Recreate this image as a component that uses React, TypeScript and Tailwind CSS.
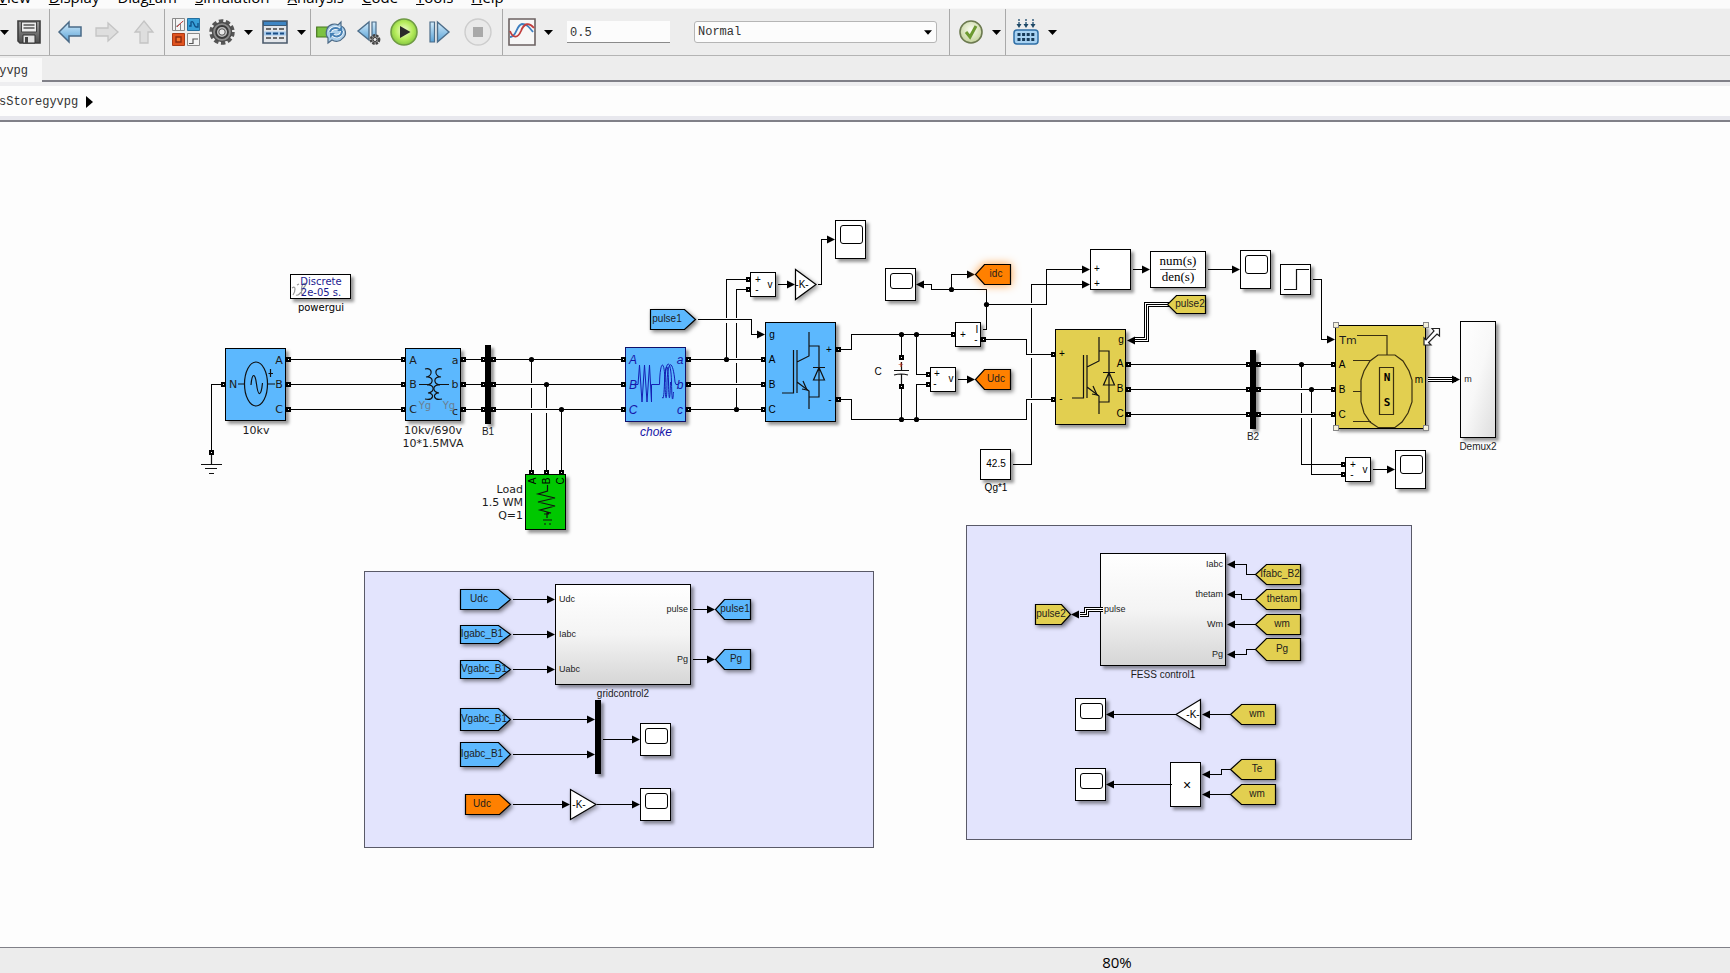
import type { ReactNode } from "react";
import { clsx } from "clsx";

// Page position of the canvas' top edge: diagram coordinates count from the window's top
const CANVAS_TOP = 122;

const menuItems = [
  ["", "V", "iew"],
  ["", "D", "isplay"],
  ["Diag", "r", "am"],
  ["", "S", "imulation"],
  ["", "A", "nalysis"],
  ["", "C", "ode"],
  ["", "T", "ools"],
  ["", "H", "elp"],
];

/* ---------- toolbar ---------- */

function Caret({ label }: { label: string }) {
  return (
    <button type="button" aria-label={label} className="flex h-6 w-[9px] items-center justify-center">
      <svg width="9" height="5" viewBox="0 0 9 5">
        <path d="M0 0h9L4.5 5z" fill="#000" />
      </svg>
    </button>
  );
}

function ToolButton({ label, className, size, children }: { label: string; className: string; size: string; children: ReactNode }) {
  return (
    <button type="button" aria-label={label} className={clsx("flex shrink-0 items-center justify-center", className)}>
      <svg viewBox={size} className="h-full w-full overflow-visible">
        {children}
      </svg>
    </button>
  );
}

function Group({ className, children }: { className: string; children: ReactNode }) {
  return <div className={clsx("flex shrink-0 items-center border-[#a9a9a9]", className)}>{children}</div>;
}

function Toolbar() {
  return (
    <div className="flex h-[48px] shrink-0 overflow-hidden border-t border-b border-t-[#f6f6f6] border-b-[#b4b4b4] bg-[#ededed]">
      <svg width="0" height="0" className="absolute">
        <defs>
          <linearGradient id="blue" x1="0" y1="0" x2="0" y2="1">
            <stop offset="0" stopColor="#d3ecfb" />
            <stop offset="1" stopColor="#5aa2d6" />
          </linearGradient>
          <linearGradient id="gray" x1="0" y1="0" x2="0" y2="1">
            <stop offset="0" stopColor="#9a9a9a" />
            <stop offset="1" stopColor="#4e4e4e" />
          </linearGradient>
          <radialGradient id="green" cx="0.5" cy="0.45" r="0.55">
            <stop offset="0" stopColor="#f4ffd6" />
            <stop offset="0.6" stopColor="#b6ec5c" />
            <stop offset="1" stopColor="#86c840" />
          </radialGradient>
          <radialGradient id="pale" cx="0.5" cy="0.4" r="0.6">
            <stop offset="0" stopColor="#fbfcf4" />
            <stop offset="1" stopColor="#c3d39a" />
          </radialGradient>
        </defs>
      </svg>
      <Group className="border-r gap-2 pr-2">
        <Caret label="New options" />
        <ToolButton label="Save" className="h-6 w-6" size="0 0 24 24">
          <path d="M1 1h22v22H3l-2-2z" fill="url(#gray)" stroke="#3c3c3c" strokeWidth="1.6" />
          <path d="M4.500 2h15v10h-15z" fill="#ececec" stroke="#444" />
          <path d="M6.500 5h11M6.500 8h11" stroke="#555" strokeWidth="1.400" />
          <path d="M6 15h12v8H6z" fill="#e2e2e2" stroke="#333" />
          <path d="M8 17h3v6H8z" fill="#444" />
        </ToolButton>
      </Group>
      <Group className="border-r gap-[13px] px-2">
        <ToolButton label="Back" className="h-6 w-6" size="0 0 24 24">
          <path d="M1 12 11 2v5h12v9H11v6z" fill="url(#blue)" stroke="#4a6a86" strokeWidth="1.500" />
        </ToolButton>
        <ToolButton label="Forward" className="h-6 w-6" size="0 0 24 24">
          <path d="M23 12 13 3v5H1v8h12v5z" fill="#dedede" stroke="#c4c4c4" strokeWidth="1.300" />
        </ToolButton>
        <ToolButton label="Up" className="h-6 w-6" size="0 0 24 24">
          <path d="M12 1l9 11h-5v11H8V12H3z" fill="#dedede" stroke="#c4c4c4" strokeWidth="1.300" />
        </ToolButton>
      </Group>
      <Group className="border-r gap-[9px] pr-1 pl-[7px]">
        <ToolButton label="Library browser" className="h-7 w-7" size="0 0 28 28">
          <path d="M.5.5h12v12H.5zM15.500 15.500h12v12h-12z" fill="#f4f4f4" stroke="#8a8a8a" />
          <path d="M3.500 1v11M3.500 9l8-6M8.500 12V5" stroke="#888" fill="none" />
          <path d="M5 9l6-6" stroke="#c44" fill="none" />
          <path d="M15.500.5h12v12h-12z" fill="#38a0d8" stroke="#2470a0" />
          <path d="M17 8h2V4c3-2 3 5 5 5h2V5" stroke="#0e4f86" strokeWidth="1.300" fill="none" />
          <path d="M.5 15.500h12v12H.5z" fill="#e0531f" stroke="#a83a16" />
          <path d="M4 19h5v5H4z" fill="#f5752f" stroke="#8a2a10" strokeWidth="1.400" />
          <path d="M17 25.500h4V21h5" stroke="#555" fill="none" strokeWidth="1.200" />
        </ToolButton>
        <ToolButton label="Model configuration" className="h-[26px] w-[26px]" size="0 0 26 26">
          <circle cx="13" cy="13" r="10.500" fill="none" stroke="#555" strokeWidth="4.500" strokeDasharray="4.200 2.400" />
          <circle cx="13" cy="13" r="9.500" fill="#8b8b8b" stroke="#4c4c4c" strokeWidth="1.400" />
          <circle cx="13" cy="13" r="6" fill="#bcbcbc" stroke="#3a3a3a" strokeWidth="1.800" />
          <circle cx="13" cy="13" r="3.200" fill="#e8e8e8" stroke="#555" />
        </ToolButton>
        <Caret label="Configuration options" />
        <ToolButton label="Model explorer" className="h-[26px] w-[26px]" size="0 0 26 26">
          <path d="M1 2h24v22H1z" fill="#e3e6ea" stroke="#4b5b6c" strokeWidth="1.600" />
          <path d="M1.500 2.500h23v4h-23z" fill="#3f86c4" stroke="#3c5a76" />
          <path d="M4 10h5m2 0h4m2 0h5M4 19h5m2 0h4m2 0h5" stroke="#444" strokeWidth="1.500" />
          <path d="M2 12.500h22v4H2z" fill="#a9cdee" />
          <path d="M4 14.500h5m2 0h5m2 0h4" stroke="#1c4f86" strokeWidth="1.800" />
        </ToolButton>
        <Caret label="Explorer options" />
      </Group>
      <Group className="border-r gap-[9px] pr-[10px] pl-[5px]">
        <ToolButton label="Fast restart" className="h-6 w-[30px]" size="0 0 30 24">
          <path d="M.7 7h11v10H.7z" fill="#7cc242" stroke="#47761f" strokeWidth="1.200" />
          <path d="M11 9c2-5 8-6 11-4l3-3v4c5 2 6 9 2 12-3 4-8 4-11 2l-4 3v-5c-2-2-2-6-1-9z" fill="#a9cde9" stroke="#4c6a86" strokeWidth="1.200" />
          <path d="M14 12c1-4 6-5 9-3M26 11c0 5-6 7-9 4" fill="none" stroke="#fff" strokeWidth="3.600" />
          <path d="M14 12c1-4 6-5 9-3M26 11c0 5-6 7-9 4" fill="none" stroke="#4680b4" strokeWidth="2" />
          <path d="M21 11l5 0 0-5zM19 13l-5 0 0 5z" fill="#4680b4" />
        </ToolButton>
        <ToolButton label="Step back" className="h-[26px] w-[26px]" size="0 0 26 26">
          <path d="M14 3v18L3 12z" fill="url(#blue)" stroke="#4d6d89" strokeWidth="1.400" />
          <path d="M17 3h4v18h-4z" fill="url(#blue)" stroke="#4d6d89" strokeWidth="1.200" />
          <circle cx="20" cy="20.500" r="4.200" fill="#999" stroke="#444" strokeWidth="2.400" strokeDasharray="2.400 1" />
          <circle cx="20" cy="20.500" r="2" fill="#eee" stroke="#333" />
        </ToolButton>
        <ToolButton label="Run" className="h-7 w-7" size="0 0 28 28">
          <circle cx="14" cy="14" r="13" fill="url(#green)" stroke="#6f9a44" strokeWidth="1.600" />
          <path d="M10 8l10.500 6L10 20z" fill="#2a2a2a" />
        </ToolButton>
        <ToolButton label="Step forward" className="h-6 w-6" size="0 0 24 24">
          <path d="M3 2h4.500v20H3z" fill="url(#blue)" stroke="#4d6d89" strokeWidth="1.200" />
          <path d="M10.500 2v20L22 12z" fill="url(#blue)" stroke="#4d6d89" strokeWidth="1.400" />
        </ToolButton>
        <ToolButton label="Stop" className="ml-1 h-7 w-7" size="0 0 28 28">
          <circle cx="14" cy="14" r="13" fill="#e9e9e9" stroke="#cdcdcd" strokeWidth="1.400" />
          <path d="M9 9h10v10H9z" fill="#a9a9a9" />
        </ToolButton>
      </Group>
      <Group className="border-r pr-3 pl-[5px]">
        <ToolButton label="Simulation data inspector" className="h-7 w-7" size="0 0 28 28">
          <path d="M1 1h26v26H1z" fill="#f7f7f7" stroke="#6c6262" strokeWidth="1.600" />
          <path d="M2 19c7 0 6-12 12-13 5 0 7 3 11 8" fill="none" stroke="#3d7fc0" strokeWidth="1.800" />
          <path d="M2 13c3 8 8 7 11 0 3-8 8-9 13-3" fill="none" stroke="#c23f3f" strokeWidth="1.800" />
        </ToolButton>
        <div className="mr-[14px] ml-2 flex">
          <Caret label="Inspector options" />
        </div>
        <input
          aria-label="Simulation stop time"
          defaultValue="0.5"
          className="h-[22px] w-[103px] border-b border-[#8a8a8a] bg-[#fcfcfc] px-[3px] pt-[2px] font-['Liberation_Mono',monospace] text-[12px] text-[#333] outline-none"
        />
        <div className="relative ml-6">
          <select
            aria-label="Simulation mode"
            className="block h-[22px] w-[243px] appearance-none rounded-[3px] border border-[#b5b5b5] bg-[#fcfcfc] px-[3px] font-['Liberation_Mono',monospace] text-[12px] text-[#333] outline-none"
          >
            <option>Normal</option>
            <option>Accelerator</option>
            <option>Rapid Accelerator</option>
          </select>
          <svg width="8" height="5" viewBox="0 0 9 5" className="pointer-events-none absolute top-[9px] right-[5px]">
            <path d="M0 0h9L4.500 5z" fill="#000" />
          </svg>
        </div>
      </Group>
      <Group className="border-r gap-[9px] pr-1 pl-[9px]">
        <ToolButton label="Model advisor" className="h-6 w-6" size="0 0 24 24">
          <circle cx="12" cy="12" r="11" fill="url(#pale)" stroke="#6c7a50" strokeWidth="1.600" />
          <path d="M7 12l4 5 6-11" fill="none" stroke="#6c9a30" strokeWidth="3" />
        </ToolButton>
        <Caret label="Advisor options" />
      </Group>
      <Group className="gap-[9px] pl-[7px]">
        <ToolButton label="Build model" className="h-[26px] w-[26px]" size="0 0 26 26">
          <path d="M6 0v6M13 0v6M20 0v6" stroke="#2c5878" strokeWidth="1.400" strokeDasharray="2 1" />
          <path d="M3.500 5h5L6 9zM10.500 5h5L13 9zM17.500 5h5L20 9z" fill="#1e4866" />
          <rect x="1" y="11" width="24" height="14" rx="3" fill="#a8d2f2" stroke="#2f6fa6" strokeWidth="1.500" />
          <path d="M4.500 15.500h17M4.500 20.500h17" stroke="#173a58" strokeWidth="3" strokeDasharray="3 1.600" />
        </ToolButton>
        <Caret label="Build options" />
      </Group>
    </div>
  );
}

/* ---------- diagram pieces ---------- */

const fills = {
  white: "bg-white",
  blue: "bg-[#5cb8fe]",
  gold: "bg-[#e2cf50]",
  green: "bg-[#00c800]",
  black: "bg-black",
  fade: "bg-linear-to-b from-white via-[#f4f4f4] to-[#d6d6d6]",
  tall: "bg-linear-to-br from-white via-[#f8f8f8] to-[#dedede]",
};

type BlockProps = { box: number[]; fill?: keyof typeof fills; edge?: string; children?: ReactNode };

function Block({ box, fill = "white", edge = "border-black", children }: BlockProps) {
  const [x1, y1, x2, y2] = box;
  return (
    <div
      className={clsx("absolute border shadow-[3px_3px_3px_rgba(0,0,0,0.4)]", edge, fills[fill])}
      style={{ left: x1, top: y1 - CANVAS_TOP, width: x2 - x1 + 1, height: y2 - y1 + 1 }}
    >
      {children}
    </div>
  );
}

const aligns = { left: "", center: "-translate-x-1/2", right: "-translate-x-full" };

type LabelProps = { x: number; y: number; text: string; align?: keyof typeof aligns; className?: string };

function Label({ x, y, text, align = "center", className = "text-[10px]" }: LabelProps) {
  return (
    <span
      className={clsx("absolute whitespace-nowrap leading-[12px]!", aligns[align], className)}
      style={{ left: x, top: y - 6 - CANVAS_TOP }}
    >
      {text}
    </span>
  );
}

const tagFills = { blue: "fill-[#5cb8fe]", gold: "fill-[#e2cf50]", orange: "fill-[#ff8000]" };

// A From/Goto tag. Its point is `tip` px long and looks to the right or to the left.
type TagProps = { box: number[]; tip: number; dir: "left" | "right"; color: keyof typeof tagFills; text: string; textX?: number; glow?: boolean };

function Tag({ box, tip, dir, color, text, textX, glow }: TagProps) {
  const [x1, y1, x2, y2] = box;
  const w = x2 - x1;
  const h = y2 - y1;
  const points =
    dir === "right"
      ? `0,0 ${w - tip},0 ${w},${h / 2} ${w - tip},${h} 0,${h}`
      : `${w},0 ${tip},0 0,${h / 2} ${tip},${h} ${w},${h}`;
  const middle = dir === "right" ? x1 + (w - tip) / 2 : x1 + tip + (w - tip) / 2 - 1;
  return (
    <>
      <div className="absolute" style={{ left: x1, top: y1 - CANVAS_TOP, width: w + 1, height: h + 1 }}>
        <svg
          viewBox={`-0.5 -0.5 ${w + 1} ${h + 1}`}
          className={clsx(
            "block h-full w-full overflow-visible",
            glow ? "drop-shadow-[0_0_5px_#ff9d3c]" : "drop-shadow-[2px_2px_2px_rgba(0,0,0,0.5)]",
          )}
        >
          <polygon points={points} className={tagFills[color]} stroke="#000" strokeWidth="1.200" />
        </svg>
      </div>
      <Label x={Math.round(textX ?? middle)} y={Math.round((y1 + y2) / 2)} text={text} className="text-[10px] text-[#1c1c1c]" />
    </>
  );
}

function Scope({ box }: { box: number[] }) {
  return (
    <Block box={box}>
      <div className="mt-1 mr-[2px] ml-1 h-1/2 rounded-[3px] border border-black" />
    </Block>
  );
}

const tags: TagProps[] = [
  { box: [650, 309, 695, 329], tip: 11, dir: "right", color: "blue", text: "pulse1" },
  { box: [975, 264, 1010, 284], tip: 9, dir: "left", color: "orange", text: "idc", glow: true },
  { box: [975, 369, 1010, 389], tip: 9, dir: "left", color: "orange", text: "Udc" },
  { box: [1167, 295, 1205, 313], tip: 9, dir: "left", color: "gold", text: "pulse2", textX: 1190 },
  { box: [460, 589, 510, 609], tip: 12, dir: "right", color: "blue", text: "Udc" },
  { box: [460, 625, 510, 643], tip: 12, dir: "right", color: "blue", text: "Igabc_B1", textX: 482 },
  { box: [460, 660, 510, 678], tip: 12, dir: "right", color: "blue", text: "Vgabc_B1", textX: 484 },
  { box: [460, 708, 510, 730], tip: 12, dir: "right", color: "blue", text: "Vgabc_B1", textX: 484 },
  { box: [460, 742, 510, 766], tip: 12, dir: "right", color: "blue", text: "Igabc_B1", textX: 482 },
  { box: [465, 794, 510, 814], tip: 11, dir: "right", color: "orange", text: "Udc" },
  { box: [715, 599, 750, 619], tip: 9, dir: "left", color: "blue", text: "pulse1", textX: 735 },
  { box: [715, 649, 750, 669], tip: 9, dir: "left", color: "blue", text: "Pg" },
  { box: [1035, 604, 1070, 624], tip: 9, dir: "right", color: "gold", text: "pulse2", textX: 1051 },
  { box: [1255, 564, 1300, 584], tip: 11, dir: "left", color: "gold", text: "Ifabc_B2", textX: 1280 },
  { box: [1255, 589, 1300, 609], tip: 11, dir: "left", color: "gold", text: "thetam" },
  { box: [1255, 614, 1300, 634], tip: 11, dir: "left", color: "gold", text: "wm" },
  { box: [1255, 638, 1300, 660], tip: 11, dir: "left", color: "gold", text: "Pg" },
  { box: [1230, 704, 1275, 724], tip: 11, dir: "left", color: "gold", text: "wm" },
  { box: [1230, 759, 1275, 779], tip: 11, dir: "left", color: "gold", text: "Te" },
  { box: [1230, 784, 1275, 804], tip: 11, dir: "left", color: "gold", text: "wm" },
];

const scopes = [
  [835, 220, 865, 258],
  [885, 268, 915, 300],
  [1240, 250, 1270, 288],
  [1395, 450, 1425, 488],
  [640, 723, 670, 755],
  [640, 788, 670, 820],
  [1075, 698, 1105, 730],
  [1075, 768, 1105, 800],
];

// A wire that crosses another one leaves a small gap there
const wires = [
  // grid side
  "M224 384H211V450",
  "M286 359H405M286 384H405M286 409H405",
  "M461 359H625M461 384H625M461 409H625",
  "M531 359V382M531 387V407M531 412V470",
  "M546 384V407M546 412V470",
  "M561 409V470",
  "M686 359H765M686 384H765M686 409H765",
  "M726 359V322M726 317V279H748",
  "M736 409V387M736 382V362M736 357V322M736 317V289H748",
  "M697 319H751V334H760",
  "M777 284H790M817 284H821V239H830",
  // dc link
  "M838 349H851V334H953",
  "M838 399H851V419H1026V399H1053",
  "M901 334V357M901 386V419",
  "M916 334V374H928M928 384H916V419",
  "M957 379H970",
  "M982 329H986V289H931V284H922",
  "M951 289V274H970",
  "M986 304H1046V269H1085",
  "M985 339H1026V354H1053",
  "M1012 464H1031V402M1031 397V357M1031 352V307M1031 302V284H1085",
  "M1132 269H1145M1207 269H1235",
  // machine side
  "M1128 364H1335M1128 389H1335M1128 414H1335",
  "M1312 279H1321V339H1330",
  "M1301 364V387M1301 392V412M1301 417V464H1345",
  "M1311 389V412M1311 417V474H1345",
  "M1372 469H1390",
  // grid control area
  "M512 599H550M512 634H550M512 669H550",
  "M512 719H590M512 754H590M602 739H635",
  "M512 804H565M596 804H635",
  "M692 609H710M692 659H710",
  // FESS control area
  "M1255 574H1246V564H1234M1255 599H1241V594H1234M1255 624H1232M1255 649H1246V654H1234",
  "M1176 714H1112M1230 714H1207",
  "M1171 784H1112M1230 769H1221V774H1209M1230 794H1207",
];

const arrowsRight = [
  [765, 334], [795, 284], [835, 239], [975, 274], [975, 379], [1090, 269], [1090, 284], [1150, 269], [1240, 269],
  [1335, 339], [1395, 469], [1460, 379], [555, 599], [555, 634], [555, 669], [595, 719], [595, 754], [640, 739],
  [640, 804], [570, 804], [715, 609], [715, 659],
];

const arrowsLeft = [
  [916, 284], [1127, 340], [1071, 614], [1227, 564], [1227, 594], [1227, 624], [1227, 654], [1106, 714], [1202, 714],
  [1106, 784], [1202, 774], [1202, 794],
];

const ports = [
  [223, 384], [288, 359], [288, 384], [288, 409], [403, 359], [403, 384], [403, 409], [463, 359], [463, 384], [463, 409],
  [483, 359], [483, 384], [483, 409], [493, 359], [493, 384], [493, 409], [211, 452], [531, 472], [546, 472], [561, 472],
  [623, 359], [623, 384], [623, 409], [688, 359], [688, 384], [688, 409], [763, 359], [763, 384], [763, 409],
  [748, 279], [748, 289], [838, 349], [838, 399], [901, 357], [901, 386], [953, 334], [983, 339], [928, 374], [928, 384],
  [1053, 354], [1053, 399], [1128, 364], [1128, 389], [1128, 414], [1248, 364], [1248, 389], [1248, 414],
  [1258, 364], [1258, 389], [1258, 414], [1333, 364], [1333, 389], [1333, 414], [1343, 464], [1343, 474],
];

const dots = [
  [531, 359], [546, 384], [561, 409], [726, 359], [736, 409], [901, 334], [916, 334], [901, 419], [916, 419],
  [951, 289], [986, 304], [1301, 364], [1311, 389],
];

const verdana = "pt-px font-['DejaVu_Sans',Verdana,sans-serif] text-[11px] text-[#1c1c1c]";
const gui = "pt-px font-['DejaVu_Sans',Verdana,sans-serif] text-[10px] text-[#1a1a90]";
const faint = "pt-px font-['DejaVu_Sans',Verdana,sans-serif] text-[10px] text-[#6a7f92]";
const choke = "text-[12px] italic text-[#1616a8]";
const port = "text-[9px] text-[#1c1c1c]";
const caption = "pt-px text-[10px] text-[#1c1c1c]";

const labels: LabelProps[] = [
  { x: 321, y: 281, text: "Discrete", className: gui },
  { x: 321, y: 292, text: "2e-05 s.", className: gui },
  { x: 321, y: 307, text: "powergui", className: "pt-px font-['DejaVu_Sans',Verdana,sans-serif] text-[10px]" },
  { x: 233, y: 384, text: "N", className: verdana },
  { x: 279, y: 360, text: "A", className: verdana },
  { x: 279, y: 384, text: "B", className: verdana },
  { x: 279, y: 409, text: "C", className: verdana },
  { x: 256, y: 430, text: "10kv", className: verdana },
  { x: 413, y: 360, text: "A", className: verdana },
  { x: 413, y: 384, text: "B", className: verdana },
  { x: 413, y: 409, text: "C", className: verdana },
  { x: 455, y: 360, text: "a", className: verdana },
  { x: 455, y: 384, text: "b", className: verdana },
  { x: 455, y: 411, text: "c", className: verdana },
  { x: 425, y: 405, text: "Yg", className: faint },
  { x: 449, y: 405, text: "Yg", className: faint },
  { x: 433, y: 430, text: "10kv/690v", className: verdana },
  { x: 433, y: 443, text: "10*1.5MVA", className: verdana },
  { x: 488, y: 431, text: "B1", className: caption },
  { x: 523, y: 489, text: "Load", align: "right", className: verdana },
  { x: 523, y: 502, text: "1.5 WM", align: "right", className: verdana },
  { x: 523, y: 515, text: "Q=1", align: "right", className: verdana },
  { x: 533, y: 481, text: "A", className: "-rotate-90 text-[10px]" },
  { x: 547, y: 481, text: "B", className: "-rotate-90 text-[10px]" },
  { x: 561, y: 481, text: "C", className: "-rotate-90 text-[10px]" },
  { x: 633, y: 360, text: "A", className: choke },
  { x: 633, y: 385, text: "B", className: choke },
  { x: 633, y: 410, text: "C", className: choke },
  { x: 680, y: 360, text: "a", className: choke },
  { x: 680, y: 385, text: "b", className: choke },
  { x: 680, y: 410, text: "c", className: choke },
  { x: 656, y: 432, text: "choke", className: choke },
  { x: 758, y: 280, text: "+" },
  { x: 757, y: 290, text: "-" },
  { x: 770, y: 285, text: "v" },
  { x: 802, y: 285, text: "-K-" },
  { x: 772, y: 335, text: "g" },
  { x: 772, y: 360, text: "A" },
  { x: 772, y: 385, text: "B" },
  { x: 772, y: 410, text: "C" },
  { x: 829, y: 350, text: "+" },
  { x: 830, y: 400, text: "-" },
  { x: 878, y: 372, text: "C" },
  { x: 901, y: 365, text: "+", className: "text-[9px] text-[#b03030]" },
  { x: 963, y: 335, text: "+" },
  { x: 977, y: 330, text: "I" },
  { x: 976, y: 340, text: "-" },
  { x: 937, y: 374, text: "+" },
  { x: 935, y: 384, text: "-" },
  { x: 951, y: 379, text: "v" },
  { x: 996, y: 464, text: "42.5" },
  { x: 996, y: 488, text: "Qg*1" },
  { x: 1097, y: 269, text: "+" },
  { x: 1097, y: 284, text: "+" },
  { x: 1178, y: 261, text: "num(s)", className: "font-['Liberation_Serif',serif] text-[13px]" },
  { x: 1178, y: 277, text: "den(s)", className: "font-['Liberation_Serif',serif] text-[13px]" },
  { x: 1121, y: 340, text: "g" },
  { x: 1120, y: 364, text: "A" },
  { x: 1120, y: 389, text: "B" },
  { x: 1120, y: 414, text: "C" },
  { x: 1062, y: 354, text: "+" },
  { x: 1061, y: 399, text: "-" },
  { x: 1253, y: 436, text: "B2", className: caption },
  { x: 1348, y: 340, text: "Tm", className: verdana },
  { x: 1342, y: 365, text: "A" },
  { x: 1342, y: 390, text: "B" },
  { x: 1342, y: 415, text: "C" },
  { x: 1419, y: 380, text: "m" },
  { x: 1387, y: 378, text: "N", className: "font-['DejaVu_Sans_Mono',monospace] text-[11px] font-bold" },
  { x: 1387, y: 403, text: "S", className: "font-['DejaVu_Sans_Mono',monospace] text-[11px] font-bold" },
  { x: 1468, y: 379, text: "m", className: port },
  { x: 1478, y: 446, text: "Demux2", className: caption },
  { x: 1353, y: 465, text: "+" },
  { x: 1352, y: 475, text: "-" },
  { x: 1365, y: 470, text: "v" },
  { x: 559, y: 599, text: "Udc", align: "left", className: port },
  { x: 559, y: 634, text: "Iabc", align: "left", className: port },
  { x: 559, y: 669, text: "Uabc", align: "left", className: port },
  { x: 688, y: 609, text: "pulse", align: "right", className: port },
  { x: 688, y: 659, text: "Pg", align: "right", className: port },
  { x: 623, y: 693, text: "gridcontrol2", className: caption },
  { x: 579, y: 805, text: "-K-" },
  { x: 1104, y: 609, text: "pulse", align: "left", className: port },
  { x: 1223, y: 564, text: "Iabc", align: "right", className: port },
  { x: 1223, y: 594, text: "thetam", align: "right", className: port },
  { x: 1223, y: 624, text: "Wm", align: "right", className: port },
  { x: 1223, y: 654, text: "Pg", align: "right", className: port },
  { x: 1163, y: 674, text: "FESS control1", className: caption },
  { x: 1193, y: 715, text: "-K-" },
  { x: 1187, y: 785, text: "×", className: "text-[14px]" },
];

function Bridge() {
  return (
    <g fill="none" stroke="#111" strokeWidth="1.200">
      <path d="M782 393H793.500V350M797 350V393M797 362L809 356V332M797 382L809 391V409" />
      <path d="M809 346H819V397H809M813 367.500H825M819 367.500L813.500 380H824.500Z" />
      <path d="M802 389L807 390L803 381" />
    </g>
  );
}

function Symbols() {
  return (
    <g fill="none" stroke="#111" strokeWidth="1.200">
      {/* powergui scribble */}
      <path d="M292 288q3-2 3 1t-2 6M297 285l2-1M296 295c4 2 6-6 9-9s-2-4-3 0-1 10 2 9" stroke="#999" />
      {/* source */}
      <ellipse cx="256" cy="384" rx="11.500" ry="22" />
      <path d="M238 384H244.500M267.500 384H275M251 385C252 373 255 372 256.500 384S261 398 262.500 383M270.500 369V377M268.500 373.500H273" />
      {/* ground */}
      <path d="M211.500 455V464M201 464.500H222M205 468.500H217M209 473.500H214" />
      {/* transformer coils */}
      <path d="M419 384.500H430M425 369c8-2 8 7 1 8 8-1 8 7 1 8 8-1 8 7 1 8 7 0 6 8-3 6" />
      <path d="M449 384.500H437M442 369c-8-2-8 7-1 8-8-1-8 7-1 8-8-1-8 7-1 8-7 0-6 8 3 6" />
      {/* load */}
      <path d="M547.500 485V491L538 494L555 498L538 502L555 506L540 510L551 513H547V518M544 514H549M543 520H552M544 524H546M549 524H551" />
      {/* choke */}
      <g stroke="#1420b4" strokeLinejoin="round" strokeWidth="1">
        <path d="M635 384.500H638L639.500 365L642 402L644.500 365L647 402L649.500 365L651.500 402V384.500H659.500" />
        <path d="M659.500 384.500C660 360 664.500 358 665 382S667 400 667 382M662.500 397C663 400 664 398 664.500 382S668 358 668.500 382S670 400 670.500 382M665 382C665.500 358 671 358 671.500 382S673 400 673.500 392M667 382C668 358 673 360 675 382L676 384.500H678" />
      </g>
      <Bridge />
      <g transform="translate(290 5)">
        <Bridge />
      </g>
      {/* capacitor */}
      <path d="M894 370.500H909M894 375q7-2 14 0M901.500 362V370M901.500 374V384" />
      {/* transfer function bar and step */}
      <path d="M1160 269.500H1196" stroke="#555" />
      <path d="M1284 289.500H1296.500V269.500H1309" />
      {/* machine */}
      <g stroke="#3a3010">
        <path d="M1357 335.500H1387V355" />
        <path d="M1378 355H1395L1403 361L1409 371L1412 380V402L1408 413L1402 422L1395 427.500H1378L1370 422L1364 413L1361 402V380L1364 371L1370 361Z" />
        <path d="M1353 360.500H1371M1353 391.500H1361M1353 421.500H1371M1379.500 367.500H1393.500V414.500H1379.500Z" />
      </g>
    </g>
  );
}

// Three parallel lines of a vector signal
function VectorWire({ d }: { d: string }) {
  return (
    <g fill="none">
      <path d={d} stroke="#000" strokeWidth="5" />
      <path d={d} stroke="#fff" strokeWidth="3" />
      <path d={d} stroke="#000" strokeWidth="1" />
    </g>
  );
}

function Layer({ children }: { children: ReactNode }) {
  return (
    <svg className="pointer-events-none absolute inset-0 h-full w-full overflow-visible">
      <g transform={`translate(0 ${-CANVAS_TOP})`}>{children}</g>
    </svg>
  );
}

function Area({ box }: { box: number[] }) {
  const [x1, y1, x2, y2] = box;
  return (
    <div
      className="absolute border border-[#5a5a68] bg-[#e3e4fd]"
      style={{ left: x1, top: y1 - CANVAS_TOP, width: x2 - x1, height: y2 - y1 }}
    />
  );
}

function Diagram() {
  return (
    <main className="relative min-h-0 flex-1 overflow-hidden bg-[#fdfdfd]">
      <Area box={[364, 571, 874, 848]} />
      <Area box={[966, 525, 1412, 840]} />

      <Block box={[290, 274, 350, 298]} />
      <Block box={[225, 348, 285, 420]} fill="blue" />
      <Block box={[405, 348, 460, 420]} fill="blue" />
      <Block box={[485, 345, 490, 423]} fill="black" />
      <Block box={[525, 474, 565, 529]} fill="green" />
      <Block box={[625, 347, 685, 421]} fill="blue" edge="border-[#10106a]" />
      <Block box={[765, 322, 835, 421]} fill="blue" />
      <Block box={[750, 272, 775, 296]} />
      <Block box={[955, 322, 980, 346]} />
      <Block box={[930, 367, 955, 391]} />
      <Block box={[980, 449, 1010, 479]} />
      <Block box={[1090, 249, 1130, 289]} />
      <Block box={[1150, 251, 1205, 287]} />
      <Block box={[1055, 329, 1125, 424]} fill="gold" />
      <Block box={[1250, 350, 1255, 428]} fill="black" />
      <Block box={[1280, 264, 1310, 294]} />
      <Block box={[1335, 325, 1425, 428]} fill="gold" />
      <Block box={[1460, 321, 1495, 437]} fill="tall" />
      <Block box={[1345, 457, 1370, 481]} />
      <Block box={[555, 584, 690, 684]} fill="fade" />
      <Block box={[595, 700, 600, 773]} fill="black" />
      <Block box={[1100, 553, 1225, 665]} fill="fade" />
      <Block box={[1170, 762, 1200, 806]} />
      {scopes.map((box) => (
        <Scope key={box.join()} box={box} />
      ))}

      <Layer>
        <g fill="none" stroke="#000" shapeRendering="crispEdges" transform="translate(0.5 0.5)">
          {wires.map((d) => (
            <path key={d} d={d} />
          ))}
        </g>
        <g shapeRendering="crispEdges" transform="translate(0.5 0.5)">
          <VectorWire d="M1168 304H1146V339H1134" />
          <VectorWire d="M1427 379H1455" />
          <VectorWire d="M1102 609H1086V614H1079" />
        </g>
        <g className="drop-shadow-[2px_2px_2px_rgba(0,0,0,0.4)]" fill="#fff" stroke="#000" strokeWidth="1.200">
          <path d="M795.500 269.500V299.500L816 284.500Z" />
          <path d="M570.500 789.500V819.500L596 804.500Z" />
          <path d="M1200.500 699.500V729.500L1176 714.500Z" />
        </g>
        {arrowsRight.map(([x, y]) => (
          <path key={`${x},${y}`} d={`M${x} ${y + 0.5}l-8 -4v8z`} />
        ))}
        {arrowsLeft.map(([x, y]) => (
          <path key={`${x},${y}`} d={`M${x} ${y + 0.5}l8 -4v8z`} />
        ))}
        {ports.map(([x, y]) => (
          <g key={`${x},${y}`} shapeRendering="crispEdges">
            <rect x={x - 2} y={y - 2} width="5" height="5" />
            <rect x={x} y={y} width="1" height="1" fill="#fff" />
          </g>
        ))}
        {dots.map(([x, y]) => (
          <circle key={`${x},${y}`} cx={x + 0.5} cy={y + 0.5} r="2.600" />
        ))}
        <Symbols />
      </Layer>

      {tags.map((tag) => (
        <Tag key={tag.box.join()} {...tag} />
      ))}
      {labels.map((label) => (
        <Label key={`${label.x},${label.y}`} {...label} />
      ))}

      {/* selection handles and the resize pointer */}
      <Layer>
        <g fill="#f4f0dc" stroke="#888">
          <rect x="1333.500" y="322.500" width="5" height="5" />
          <rect x="1423.500" y="322.500" width="5" height="5" />
          <rect x="1333.500" y="425.500" width="5" height="5" />
          <rect x="1423.500" y="425.500" width="5" height="5" />
        </g>
        <path d="M1424 345V338L1426 340L1434 331L1432 328.500H1439.500V336L1437 334L1428.500 342.500L1431 345Z" fill="#fff" stroke="#222" strokeWidth="1.200" />
      </Layer>
    </main>
  );
}

export default function App() {
  return (
    <div className="flex h-screen flex-col overflow-hidden bg-[#ededed] font-['Liberation_Sans',Arial,sans-serif] text-black">
      <nav className="flex h-2 shrink-0 items-end gap-[18px] overflow-hidden bg-[#fbfbfb] font-['Open_Sans',sans-serif] text-[15px] leading-[20px]">
        {menuItems.map(([before, key, after], i) => (
          <a key={after} href="#" className={clsx("mb-px block", i === 0 && "-ml-[2px]")}>
            {before}
            <span className="underline">{key}</span>
            {after}
          </a>
        ))}
      </nav>
      <Toolbar />
      <div className="flex h-[26px] shrink-0 items-end border-b-2 border-[#808088] font-['Liberation_Mono',monospace] text-[12px] text-[#333]">
        <button type="button" className="-mb-[2px] flex h-6 w-[42px] items-center justify-end bg-[#f9f9f9] pt-[2px] pr-[14px]">
          yvpg
        </button>
      </div>
      <div className="flex h-[40px] shrink-0 items-center gap-2 border-t-4 border-b-2 border-t-[#eeeef0] border-b-[#808088] bg-[#fdfdfd] font-['Liberation_Mono',monospace] text-[12px] text-[#333] shadow-[inset_0_-4px_0_#e8e8ee]">
        <a href="#" className="-ml-px pb-[2px]">
          sStoregyvpg
        </a>
        <svg width="7" height="12" viewBox="0 0 7 12" className="mb-[2px]">
          <path d="M0 0l7 6-7 6z" />
        </svg>
      </div>
      <Diagram />
      <footer className="flex h-[26px] shrink-0 items-center border-t border-[#808088] bg-[#ececec] pt-[3px] font-['Open_Sans',sans-serif] text-[15px]">
        <div className="w-[1117px] max-w-[65%]" />
        <output className="-translate-x-1/2">80%</output>
      </footer>
    </div>
  );
}
